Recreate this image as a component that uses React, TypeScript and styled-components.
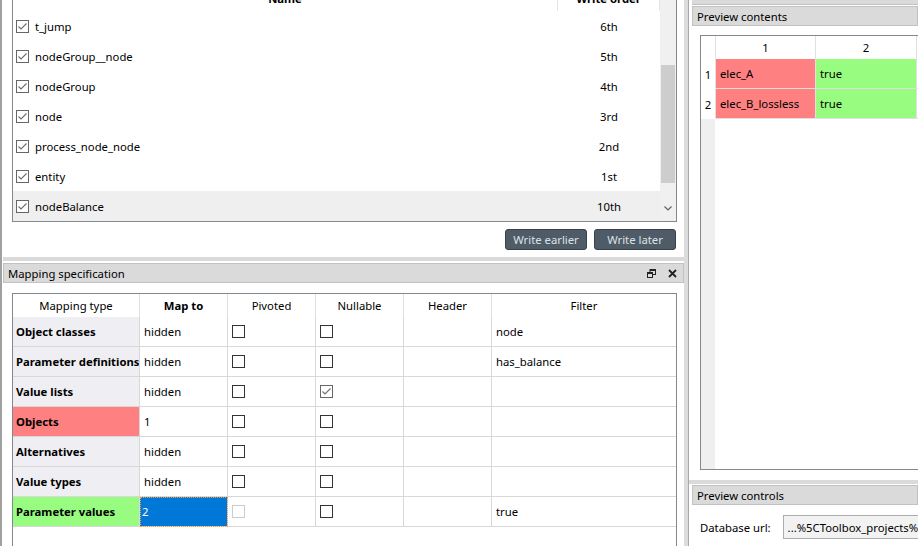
import styled, { createGlobalStyle } from 'styled-components';

const GlobalStyle = createGlobalStyle`
  body {
    margin: 0;
    background: #fff;
    font-family: "Noto Sans", "Open Sans", sans-serif;
    font-size: 11.3px;
    color: #000;
  }
`;

const exportRows = [
  { name: 't_jump', order: '6th' },
  { name: 'nodeGroup__node', order: '5th' },
  { name: 'nodeGroup', order: '4th' },
  { name: 'node', order: '3rd' },
  { name: 'process_node_node', order: '2nd' },
  { name: 'entity', order: '1st' },
  { name: 'nodeBalance', order: '10th', current: true },
];

type MapRow = {
  type: string;
  mapTo: string;
  pivoted: 'off' | 'disabled';
  nullable: boolean;
  filter: string;
  tone?: 'red' | 'green';
  selected?: boolean;
};

const mappingRows: MapRow[] = [
  { type: 'Object classes', mapTo: 'hidden', pivoted: 'off', nullable: false, filter: 'node' },
  { type: 'Parameter definitions', mapTo: 'hidden', pivoted: 'off', nullable: false, filter: 'has_balance' },
  { type: 'Value lists', mapTo: 'hidden', pivoted: 'off', nullable: true, filter: '' },
  { type: 'Objects', mapTo: '1', pivoted: 'off', nullable: false, filter: '', tone: 'red' },
  { type: 'Alternatives', mapTo: 'hidden', pivoted: 'off', nullable: false, filter: '' },
  { type: 'Value types', mapTo: 'hidden', pivoted: 'off', nullable: false, filter: '' },
  { type: 'Parameter values', mapTo: '2', pivoted: 'disabled', nullable: false, filter: 'true', tone: 'green', selected: true },
];

const previewRows = [
  ['elec_A', 'true'],
  ['elec_B_lossless', 'true'],
];

const toneColor = { red: '#ff8080', green: '#98fc80' };

const Check = ({ checked, look = 'dark' }: { checked?: boolean; look?: 'dark' | 'soft' | 'disabled' }) => (
  <Box $look={look}>
    {checked && (
      <svg width="11" height="11" viewBox="0 0 11 11">
        <polyline points="1.5,5.5 4,8 9.5,2.5" fill="none" stroke="#6e6e6e" strokeWidth="1.1" />
      </svg>
    )}
  </Box>
);

const FloatIcon = () => (
  <svg width="9" height="9" viewBox="0 0 9 9">
    <rect x="3" y="0.5" width="5.5" height="5" fill="none" stroke="#222" />
    <line x1="3" y1="1" x2="8.5" y2="1" stroke="#222" strokeWidth="2" />
    <rect x="0.5" y="3.5" width="5" height="5" fill="#dadada" stroke="#222" />
    <line x1="0.5" y1="4" x2="5.5" y2="4" stroke="#222" strokeWidth="2" />
  </svg>
);

const CloseIcon = () => (
  <svg width="9" height="9" viewBox="0 0 9 9">
    <path d="M1 1 L8 8 M8 1 L1 8" stroke="#222" strokeWidth="1.8" />
  </svg>
);

const App = () => {
  return (
    <>
      <GlobalStyle />
      <Window>
        <LeftPane>
          <TopDock>
            <ListFrame>
              <ListBody>
                <ListHeader>
                  <HeadCell $bold>Name</HeadCell>
                  <HeadCell $bold>Write order</HeadCell>
                </ListHeader>
                {exportRows.map((row) => (
                  <ListRow key={row.name} $current={row.current}>
                    <NameCell>
                      <Check checked look="soft" />
                      <span>{row.name}</span>
                    </NameCell>
                    <OrderCell>{row.order}</OrderCell>
                  </ListRow>
                ))}
              </ListBody>
              <Scrollbar>
                <Thumb />
                <ArrowDown>
                  <svg width="8" height="5" viewBox="0 0 8 5">
                    <polyline points="0.5,0.5 4,4 7.5,0.5" fill="none" stroke="#606060" strokeWidth="1.2" />
                  </svg>
                </ArrowDown>
              </Scrollbar>
            </ListFrame>
            <ButtonRow>
              <OrderButton>Write earlier</OrderButton>
              <OrderButton>Write later</OrderButton>
            </ButtonRow>
          </TopDock>
          <HSplit />
          <DockTitle>
            <span>Mapping specification</span>
            <TitleIcons>
              <FloatIcon />
              <CloseIcon />
            </TitleIcons>
          </DockTitle>
          <MappingFrame>
            <MapGrid>
              <MapHead>Mapping type</MapHead>
              <MapHead $bold>Map to</MapHead>
              <MapHead>Pivoted</MapHead>
              <MapHead>Nullable</MapHead>
              <MapHead>Header</MapHead>
              <MapHead $last>Filter</MapHead>
              {mappingRows.map((row) => (
                <MapRowGroup key={row.type}>
                  <TypeCell $tone={row.tone}>{row.type}</TypeCell>
                  <MapCell $selected={row.selected}>{row.mapTo}</MapCell>
                  <MapCell>
                    <Check look={row.pivoted === 'disabled' ? 'disabled' : 'dark'} />
                  </MapCell>
                  <MapCell>
                    <Check checked={row.nullable} look={row.nullable ? 'soft' : 'dark'} />
                  </MapCell>
                  <MapCell />
                  <MapCell $last>{row.filter}</MapCell>
                </MapRowGroup>
              ))}
            </MapGrid>
          </MappingFrame>
        </LeftPane>
        <VSplit />
        <RightPane>
          <TopStrip />
          <DockTitle $tight>
            <span>Preview contents</span>
          </DockTitle>
          <PreviewFrame>
            <PreviewGrid>
              <Corner />
              <PreviewHead>1</PreviewHead>
              <PreviewHead>2</PreviewHead>
              <PreviewHead />
              {previewRows.map((row, i) => (
                <PreviewLine key={row[0]}>
                  <RowNumber>{i + 1}</RowNumber>
                  <PreviewCell $tone="red">{row[0]}</PreviewCell>
                  <PreviewCell $tone="green">{row[1]}</PreviewCell>
                  <PreviewCell />
                </PreviewLine>
              ))}
              <RowFiller />
            </PreviewGrid>
          </PreviewFrame>
          <HSplit $right />
          <DockTitle $tight>
            <span>Preview controls</span>
          </DockTitle>
          <ControlsRow>
            <label>Database url:</label>
            <UrlBox>...%5CToolbox_projects%5Cspine_export%5Cdb.sqlite</UrlBox>
          </ControlsRow>
        </RightPane>
      </Window>
    </>
  );
};

const Window = styled.div`
  display: grid;
  grid-template-columns: 684px 5px 1fr;
  height: 546px;
  overflow: hidden;
`;

const LeftPane = styled.div`
  display: flex;
  flex-direction: column;
  border-left: 2px solid #a0a0a0;
  min-width: 0;
  overflow: hidden;
`;

const TopDock = styled.div`
  height: 257px;
  display: flex;
  flex-direction: column;
  flex-shrink: 0;
`;

const ListFrame = styled.div`
  margin: -15px 7px 0 10px;
  height: 235px;
  flex-shrink: 0;
  border: 1px solid #828790;
  display: flex;
  overflow: hidden;
`;

const ListBody = styled.div`
  flex: 1;
  display: flex;
  flex-direction: column;
`;

const ListHeader = styled.div`
  display: grid;
  grid-template-columns: 545px 1fr;
  height: 25px;
  flex-shrink: 0;
`;

const HeadCell = styled.div<{ $bold?: boolean }>`
  display: flex;
  align-items: center;
  justify-content: center;
  font-weight: ${(p) => (p.$bold ? 700 : 400)};
  border-right: 1px solid #e5e5e5;
`;

const ListRow = styled.div<{ $current?: boolean }>`
  display: grid;
  grid-template-columns: 545px 1fr;
  height: 30px;
  flex-shrink: 0;
  background: ${(p) => (p.$current ? '#efefef' : '#fff')};
`;

const NameCell = styled.div`
  display: flex;
  align-items: center;
  gap: 6px;
  padding-left: 3px;
`;

const OrderCell = styled.div`
  display: flex;
  align-items: center;
  justify-content: center;
`;

const Scrollbar = styled.div`
  width: 16px;
  background: #f0f0f0;
  display: flex;
  flex-direction: column;
  align-items: center;
`;

const Thumb = styled.div`
  margin-top: 79px;
  width: 14px;
  height: 118px;
  background: #cdcdcd;
`;

const ArrowDown = styled.div`
  margin-top: auto;
  height: 15px;
  display: flex;
  align-items: flex-start;
  justify-content: center;
`;

const Box = styled.span<{ $look: 'dark' | 'soft' | 'disabled' }>`
  width: 13px;
  height: 13px;
  box-sizing: border-box;
  flex-shrink: 0;
  display: inline-flex;
  align-items: center;
  justify-content: center;
  background: #fff;
  border: 1px solid
    ${(p) => (p.$look === 'dark' ? '#333' : p.$look === 'soft' ? '#666' : '#cccccc')};
`;

const ButtonRow = styled.div`
  display: flex;
  justify-content: flex-end;
  gap: 7px;
  padding: 7px 8px 0 0;
`;

const OrderButton = styled.button`
  width: 82px;
  height: 21px;
  padding: 0;
  border: 1px solid #39424b;
  border-radius: 3px;
  background: #4f5b66;
  color: #dde2e7;
  font-family: inherit;
  font-size: 11.3px;
`;

const HSplit = styled.div<{ $right?: boolean }>`
  height: 4px;
  flex-shrink: 0;
  margin: ${(p) => (p.$right ? '10px 0 0 0' : '0 0 0 1px')};
  background: #dadada;
`;

const DockTitle = styled.div<{ $tight?: boolean }>`
  height: 20px;
  box-sizing: border-box;
  flex-shrink: 0;
  margin-top: ${(p) => (p.$tight ? '1px' : '2px')};
  margin-left: ${(p) => (p.$tight ? '3px' : '1px')};
  padding: 0 6px 0 4px;
  display: flex;
  align-items: center;
  justify-content: space-between;
  background: #dadada;
  border: 1px solid #c2c2c2;
`;

const TitleIcons = styled.div`
  display: flex;
  align-items: center;
  gap: 12px;
`;

const MappingFrame = styled.div`
  margin: 10px 7px 0 10px;
  height: 300px;
  flex-shrink: 0;
  border: 1px solid #828790;
  background: #fff;
`;

const MapGrid = styled.div`
  display: grid;
  grid-template-columns: 127px 88px 88px 88px 88px 1fr;
  grid-template-rows: 23px;
  grid-auto-rows: 30px;
`;

const MapRowGroup = styled.div`
  display: contents;
`;

const MapHead = styled.div<{ $bold?: boolean; $last?: boolean }>`
  display: flex;
  align-items: center;
  justify-content: center;
  font-weight: ${(p) => (p.$bold ? 700 : 400)};
  border-right: ${(p) => (p.$last ? 'none' : '1px solid #e0e0e0')};
`;

const TypeCell = styled.div<{ $tone?: 'red' | 'green' }>`
  display: flex;
  align-items: center;
  padding-left: 3px;
  font-weight: 700;
  white-space: nowrap;
  overflow: hidden;
  background: ${(p) => (p.$tone ? toneColor[p.$tone] : '#efeff3')};
  border-bottom: 1px solid #d8d8d8;
  border-right: 1px solid #d8d8d8;
`;

const MapCell = styled.div<{ $selected?: boolean; $last?: boolean }>`
  display: flex;
  align-items: center;
  padding-left: ${(p) => (p.$selected ? '2px' : '4px')};
  background: ${(p) => (p.$selected ? '#0078d7' : '#fff')};
  color: ${(p) => (p.$selected ? '#fff' : '#000')};
  border-bottom: 1px solid #d8d8d8;
  border-right: ${(p) => (p.$last ? 'none' : '1px solid #d8d8d8')};
  outline: ${(p) => (p.$selected ? '1px dotted #ff9a3c' : 'none')};
  outline-offset: -1px;
`;

const VSplit = styled.div`
  background: #dcdcdc;
  border-right: 1px solid #a8a8a8;
`;

const RightPane = styled.div`
  display: flex;
  flex-direction: column;
  min-width: 0;
  overflow: hidden;
`;

const TopStrip = styled.div`
  height: 4px;
  flex-shrink: 0;
  margin-left: 3px;
  background: #dadada;
  border-bottom: 1px solid #c2c2c2;
`;

const PreviewFrame = styled.div`
  margin: 9px 0 0 11px;
  width: 240px;
  height: 435px;
  box-sizing: border-box;
  flex-shrink: 0;
  border: 1px solid #828790;
  display: flex;
  flex-direction: column;
`;

const PreviewGrid = styled.div`
  flex: 1;
  display: grid;
  grid-template-columns: 14px 100px 101px 1fr;
  grid-template-rows: 23px 30px 30px 1fr;
`;

const PreviewLine = styled.div`
  display: contents;
`;

const Corner = styled.div`
  background: #fff;
`;

const PreviewHead = styled.div`
  display: flex;
  align-items: center;
  justify-content: center;
  border-left: 1px solid #e0e0e0;
`;

const RowNumber = styled.div`
  display: flex;
  align-items: center;
  justify-content: center;
`;

const PreviewCell = styled.div<{ $tone?: 'red' | 'green' }>`
  display: flex;
  align-items: center;
  padding-left: 4px;
  background: ${(p) => (p.$tone ? toneColor[p.$tone] : '#fff')};
  border-left: 1px solid #e0e0e0;
  border-bottom: 1px solid #e0e0e0;
`;

const RowFiller = styled.div`
  grid-column: 1;
  background: #efefef;
`;

const ControlsRow = styled.div`
  display: flex;
  align-items: center;
  gap: 12px;
  padding: 10px 0 0 11px;
  white-space: nowrap;
`;

const UrlBox = styled.div`
  height: 24px;
  box-sizing: border-box;
  padding: 0 4px;
  display: flex;
  align-items: center;
  background: #f2f2f2;
  border: 1px solid #adadad;
  flex-shrink: 0;
`;

export default App;
